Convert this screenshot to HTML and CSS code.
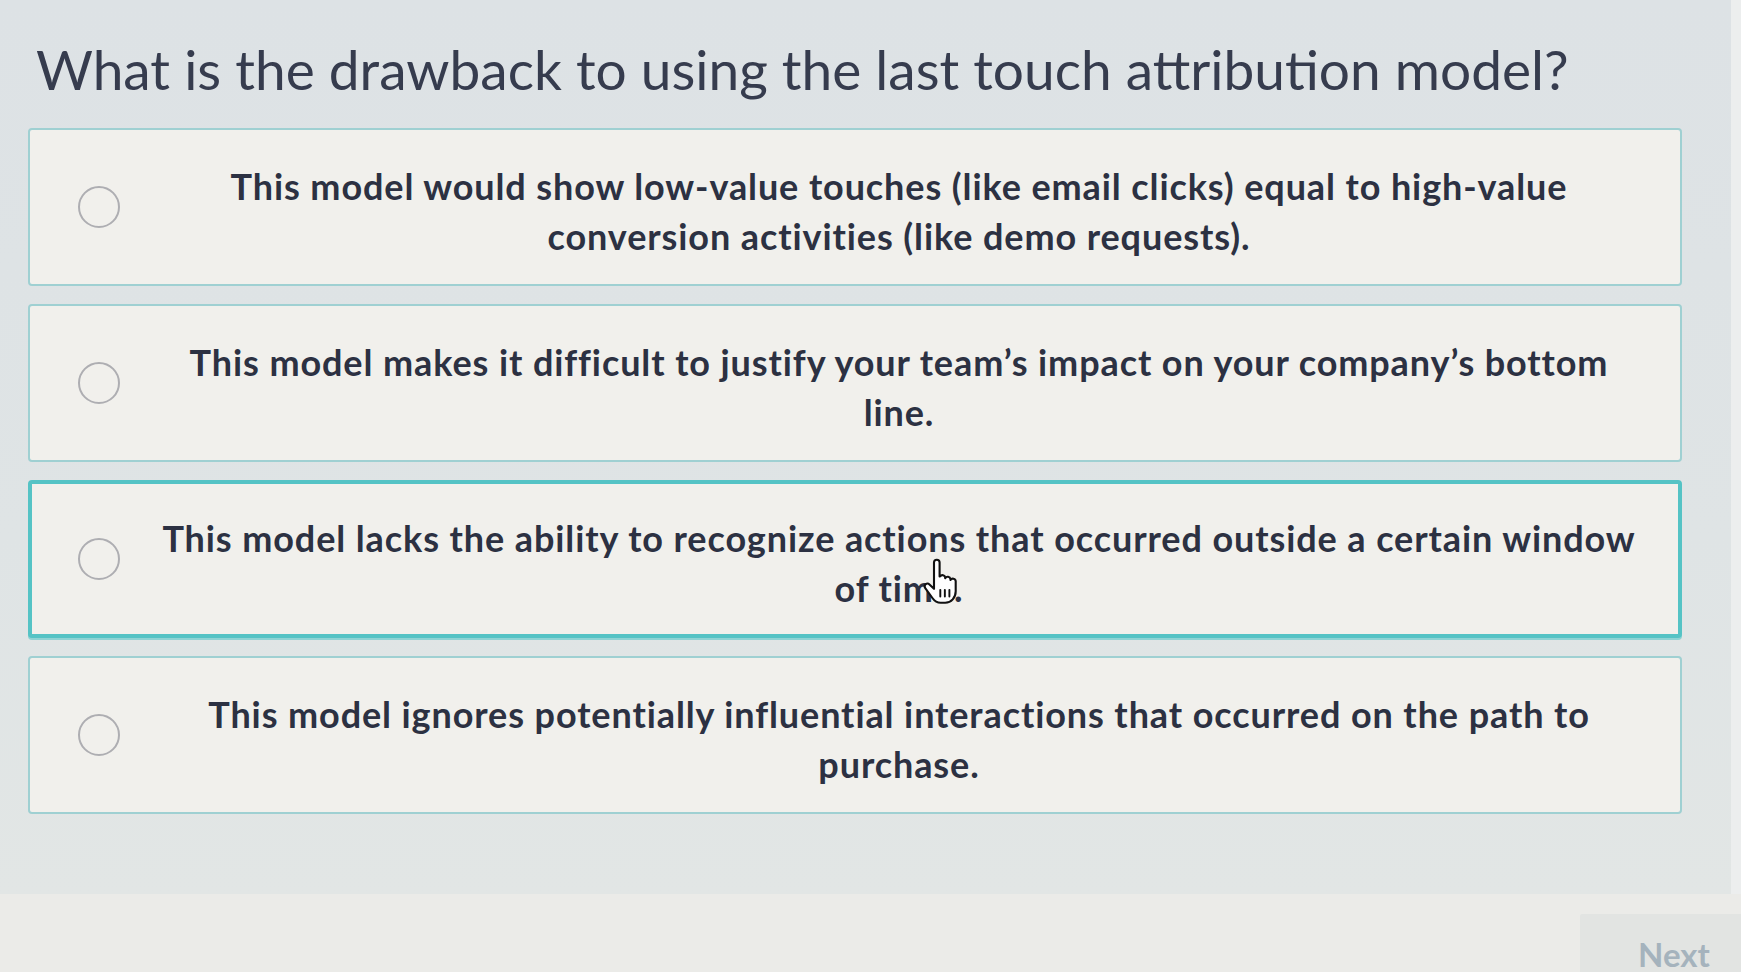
FILE: index.html
```html
<!DOCTYPE html>
<html lang="en">
<head>
<meta charset="utf-8">
<title>Quiz question</title>
<link rel="stylesheet" href="styles.css">
</head>
<body>
<div class="screen">
  <main class="quiz">
    <h1 class="question">What is the drawback to using the last touch attribution model?</h1>
    <ul class="options">
      <li class="option">
        <span class="radio"></span>
        <p class="option-text">This model would show low-value touches (like email clicks) equal to high-value<br>conversion activities (like demo requests).</p>
      </li>
      <li class="option">
        <span class="radio"></span>
        <p class="option-text">This model makes it difficult to justify your team’s impact on your company’s bottom<br>line.</p>
      </li>
      <li class="option option-hover">
        <span class="radio"></span>
        <p class="option-text">This model lacks the ability to recognize actions that occurred outside a certain window<br>of tim<span class="cursor-anchor">e<svg class="hand" viewBox="0 0 24 28" aria-hidden="true"><path d="M8 2.6a1.6 1.6 0 0 1 3.2 0V10.6l.3-.1a1.6 1.6 0 0 1 2.9.7v.4a1.6 1.6 0 0 1 3 .5v.5a1.6 1.6 0 0 1 3 .7V19c0 3.6-2.5 6.6-6 6.6h-2.6c-2 0-3.5-1-4.6-2.6L3 17.2a1.6 1.6 0 0 1 2.4-2.1L8 17.6Z" fill="#fff" stroke="#111" stroke-width="1.2" stroke-linejoin="round"/><path d="M11.6 18.2v3.8M14.2 18.2v3.8M16.8 18.2v3.8" stroke="#111" stroke-width="1.1" stroke-linecap="round"/></svg></span>.</p>
      </li>
      <li class="option">
        <span class="radio"></span>
        <p class="option-text">This model ignores potentially influential interactions that occurred on the path to<br>purchase.</p>
      </li>
    </ul>
  </main>
  <footer class="footer">
    <button class="next" type="button">Next</button>
  </footer>
</div>
</body>
</html>
```

FILE: styles.css
```css
* { box-sizing: border-box; }

html, body {
  margin: 0;
  padding: 0;
  height: 100%;
}

body {
  background: #e9eae7;
  font-family: "Lato", "Noto Sans", "Liberation Sans", sans-serif;
  color: #2b3040;
  overflow: hidden;
}

.screen {
  width: 1741px;
  height: 972px;
  display: flex;
  flex-direction: column;
}

.quiz {
  flex: 0 0 894px;
  background: linear-gradient(180deg, #dde2e5 0%, #dfe4e5 60%, #e2e6e5 100%);
  border-right: 10px solid #eceeee;
  padding: 36px 0 0 32px;
}

.question {
  margin: 0;
  font-weight: 400;
  font-size: 55px;
  line-height: 66px;
  letter-spacing: 0;
  color: #363c4e;
  padding-left: 4px;
}

.options {
  list-style: none;
  margin: 26px 0 0 -4px;
  padding: 0;
  width: 1654px;
  display: flex;
  flex-direction: column;
  gap: 18px;
}

.option {
  display: flex;
  align-items: center;
  min-height: 158px;
  background: #f1f0ec;
  border: 2px solid #9fd0d2;
  border-radius: 4px;
  padding: 0 24px 0 0;
}

.option-hover {
  border: 4px solid #55c3c5;
  box-shadow: 0 2px 0 #8fd3d4;
}

.radio {
  flex: 0 0 auto;
  width: 42px;
  height: 42px;
  border-radius: 50%;
  border: 2.5px solid #aeaeb2;
  margin-left: 48px;
  margin-right: 22px;
}

.option-hover .radio {
  margin-left: 46px;
}

.option-text {
  flex: 0 0 1514px;
  margin: 0;
  padding: 8px 0 0;
  text-align: center;
  font-size: 36px;
  line-height: 50px;
  font-weight: 700;
  color: #2c3142;
  letter-spacing: 0.9px;
}

.cursor-anchor {
  position: relative;
}

.hand {
  position: absolute;
  left: -14px;
  top: -8px;
  width: 42px;
  height: 49px;
}

.footer {
  flex: 1;
  display: flex;
  justify-content: flex-end;
  align-items: flex-start;
  background: #ebebe8;
}

.next {
  margin-top: 20px;
  width: 161px;
  height: 60px;
  border: none;
  border-radius: 2px 0 0 0;
  background: #e2e4e2;
  font-family: "Lato", "Noto Sans", "Liberation Sans", sans-serif;
  font-weight: 700;
  font-size: 33px;
  color: #a5b3bd;
  text-align: left;
  padding: 20px 0 0 58px;
  line-height: 36px;
}
```
